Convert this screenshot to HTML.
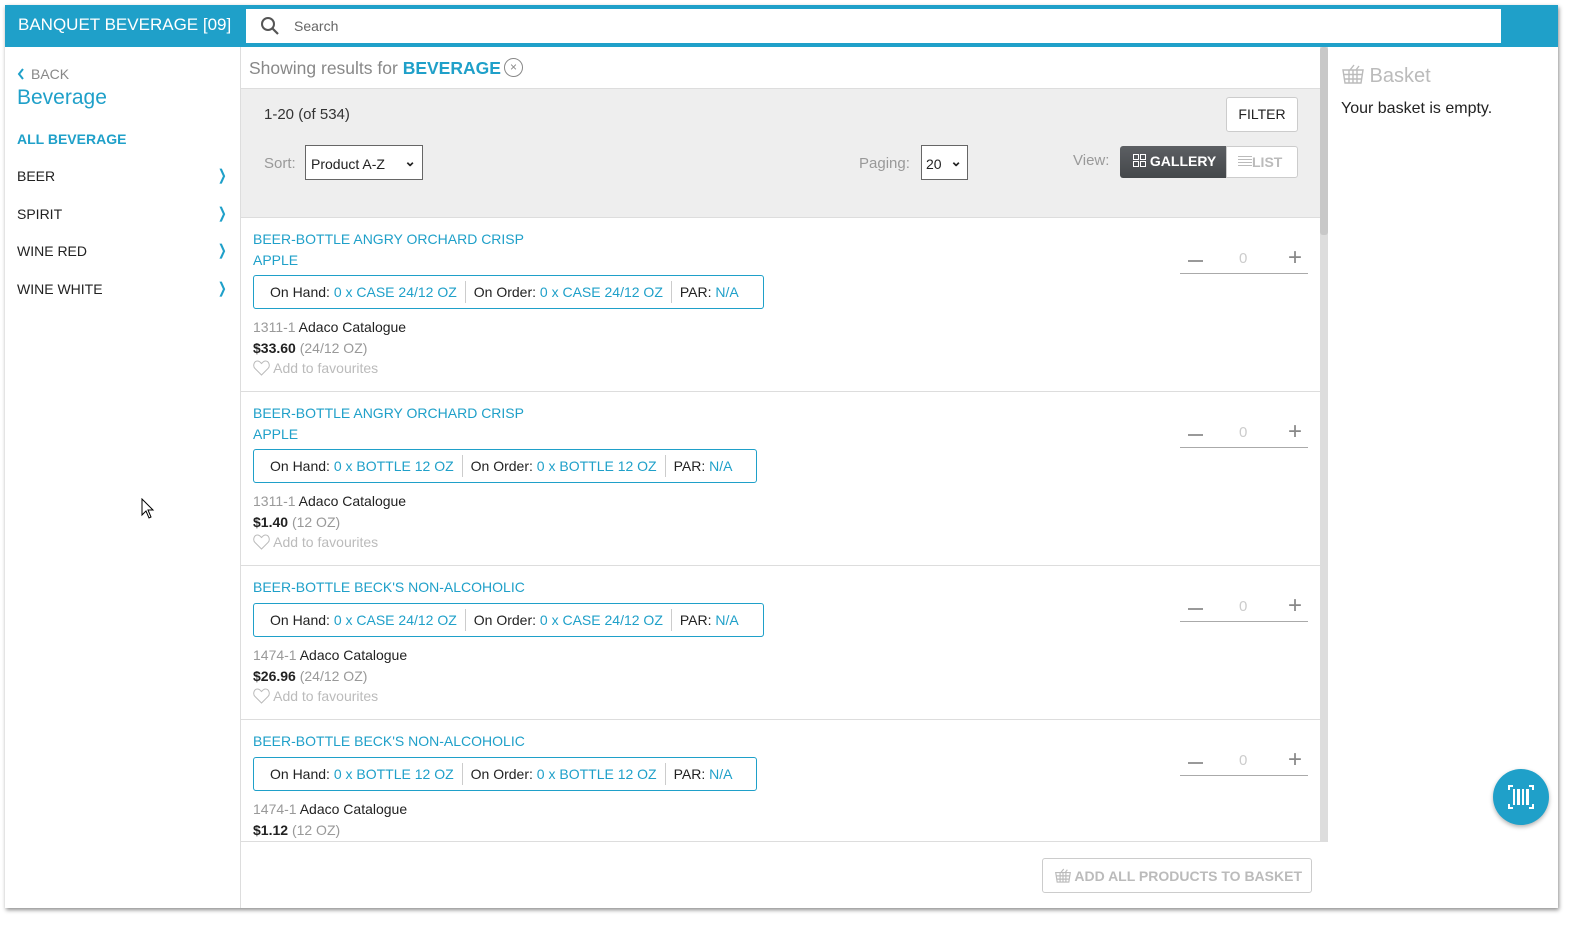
<!DOCTYPE html>
<html><head><meta charset="utf-8"><style>
*{box-sizing:border-box;margin:0;padding:0}
body{width:1592px;height:931px;background:#fff;font-family:"Liberation Sans",sans-serif;position:relative;overflow:hidden;font-size:14px;color:#222}
.a{position:absolute}
.frame{left:5px;top:5px;width:1553px;height:903px;background:#fff;box-shadow:1px 2px 4px rgba(0,0,0,.45)}
.blue{color:#1fa0c9}
.grey{color:#999}
.prod{left:241px;width:1079px;border-bottom:1px solid #ddd;background:#fff}
.name{position:absolute;left:12px;font-size:14px;color:#1fa0c9;line-height:20.5px}
.box{position:absolute;left:12px;height:34px;border:1px solid #1fa0c9;border-radius:3px;display:flex;align-items:center;font-size:14px;padding:0 8px}
.box span.s{padding:0 8px;height:22px;line-height:22px;border-right:1px solid #ccc}
.box span.s:last-child{border-right:none}
.meta{position:absolute;left:12px;font-size:14px;line-height:20.5px}
.qty{position:absolute;left:939px;width:128px;height:24px;border-bottom:1px solid #aaa;color:#999}
.qty .m{position:absolute;left:8px;top:10px;width:15px;height:1.5px;background:#999}
.qty .z{position:absolute;left:59px;top:0;font-size:15px;color:#ccc}
.qty .p{position:absolute;right:6px;top:-6px;font-size:24px;color:#888}
.nav{left:17px;font-size:14px;color:#222}
.chev{left:216px;color:#1fa0c9;font-size:15px;transform:scaleX(.7)}
</style></head><body>
<div class="a frame"></div>
<div class="a" style="left:5px;top:5px;width:1553px;height:42px;background:#1fa0c9"></div>
<div class="a" style="left:18px;top:15px;color:#fff;font-size:17px">BANQUET BEVERAGE [09]</div>
<div class="a" style="left:246px;top:9px;width:1255px;height:34px;background:#fff"></div>
<svg class="a" style="left:260px;top:16px" width="20" height="20" viewBox="0 0 20 20"><circle cx="8" cy="8" r="6" fill="none" stroke="#555" stroke-width="2"/><path d="M12.5 12.5L18 18" stroke="#555" stroke-width="2.2"/></svg>
<div class="a" style="left:294px;top:18px;color:#666;font-size:14px">Search</div>

<div class="a" style="left:240px;top:47px;width:1px;height:861px;background:#ddd"></div>
<div class="a" style="left:17px;top:66px;font-size:14px;color:#888"><svg width="8" height="12" viewBox="0 0 8 12" style="vertical-align:-1px;margin-right:6px"><path d="M6 1L2 6L6 11" fill="none" stroke="#1fa0c9" stroke-width="2"/></svg>BACK</div>
<div class="a blue" style="left:17px;top:86px;font-size:21px">Beverage</div>
<div class="a blue" style="left:17px;top:131px;font-size:14px;font-weight:bold">ALL BEVERAGE</div>
<div class="a nav" style="top:168px">BEER</div><div class="a chev" style="top:166px">&#10095;</div>
<div class="a nav" style="top:206px">SPIRIT</div><div class="a chev" style="top:204px">&#10095;</div>
<div class="a nav" style="top:243px">WINE RED</div><div class="a chev" style="top:241px">&#10095;</div>
<div class="a nav" style="top:281px">WINE WHITE</div><div class="a chev" style="top:279px">&#10095;</div>

<div class="a" style="left:249px;top:58px;font-size:17.5px;color:#888">Showing results for <b class="blue">BEVERAGE</b></div>
<div class="a" style="left:504px;top:58px;width:19px;height:19px;border:1.5px solid #888;border-radius:50%;color:#888;font-size:12px;text-align:center;line-height:16px">×</div>
<div class="a" style="left:241px;top:88px;width:1079px;height:130px;background:#eeeeee;border-top:1px solid #ddd;border-bottom:1px solid #ddd"></div>
<div class="a" style="left:264px;top:106px;font-size:15px;color:#333">1-20 (of 534)</div>
<div class="a" style="left:264px;top:155px;font-size:15px;color:#999">Sort:</div>
<div class="a" style="left:305px;top:145px;width:118px;height:35px;border:1px solid #666;background:#fff;font-size:14px;padding:10px 5px">Product A-Z<span class="a" style="right:6px;top:7px;font-weight:bold">&#8964;</span></div>
<div class="a" style="left:859px;top:155px;font-size:15px;color:#999">Paging:</div>
<div class="a" style="left:921px;top:145px;width:47px;height:35px;border:1px solid #666;background:#fff;font-size:14px;padding:10px 4px">20<span class="a" style="right:5px;top:7px;font-weight:bold">&#8964;</span></div>
<div class="a" style="left:1226px;top:97px;width:72px;height:35px;border:1px solid #ccc;border-radius:3px;background:#fff;font-size:14px;text-align:center;line-height:33px">FILTER</div>
<div class="a" style="left:1073px;top:152px;font-size:15px;color:#999">View:</div>
<div class="a" style="left:1120px;top:146px;width:106px;height:32px;background:linear-gradient(#5c5f63,#44474a);border-radius:3px 0 0 3px;color:#fff;font-weight:bold;font-size:14px;line-height:31px;padding-left:13px">
<svg width="13" height="13" style="vertical-align:-1px" viewBox="0 0 13 13"><g fill="none" stroke="#fff"><rect x=".5" y=".5" width="5" height="5"/><rect x="7.5" y=".5" width="5" height="5"/><rect x=".5" y="7.5" width="5" height="5"/><rect x="7.5" y="7.5" width="5" height="5"/></g></svg> GALLERY</div>
<div class="a" style="left:1226px;top:146px;width:72px;height:32px;background:#fff;border:1px solid #ccc;border-radius:0 3px 3px 0;color:#bbb;font-weight:bold;font-size:14px;line-height:30px;padding-left:11px">
<svg width="14" height="13" style="vertical-align:-1px" viewBox="0 0 14 13"><g stroke="#bbb"><path d="M0 1.5H14M0 4.5H14M0 7.5H14M0 10.5H14"/></g></svg>LIST</div>

<div class="a prod" style="top:218px;height:174px">
<div class="name" style="top:11px">BEER-BOTTLE ANGRY ORCHARD CRISP<br>APPLE</div>
<div class="box" style="top:57px;width:511px"><span class="s">On Hand: <span class="blue">0 x CASE 24/12 OZ</span></span><span class="s">On Order: <span class="blue">0 x CASE 24/12 OZ</span></span><span class="s">PAR: <span class="blue">N/A</span></span></div>
<div class="meta" style="top:99px"><span class="grey">1311-1</span> Adaco Catalogue<br><b>$33.60</b> <span class="grey">(24/12 OZ)</span><br><span style="color:#bbb"><svg width="17" height="16" viewBox="0 0 17 16" style="vertical-align:-3px"><path d="M8.5 15L2 8.5C-.5 6 1 1 4.5 1C6.5 1 7.5 2.5 8.5 3.5C9.5 2.5 10.5 1 12.5 1C16 1 17.5 6 15 8.5Z" fill="none" stroke="#bbb"/></svg> Add to favourites</span></div>
<div class="qty" style="top:32px"><span class="m"></span><span class="z">0</span><span class="p">+</span></div>
</div>
<div class="a prod" style="top:392px;height:174px">
<div class="name" style="top:11px">BEER-BOTTLE ANGRY ORCHARD CRISP<br>APPLE</div>
<div class="box" style="top:57px;width:504px"><span class="s">On Hand: <span class="blue">0 x BOTTLE 12 OZ</span></span><span class="s">On Order: <span class="blue">0 x BOTTLE 12 OZ</span></span><span class="s">PAR: <span class="blue">N/A</span></span></div>
<div class="meta" style="top:99px"><span class="grey">1311-1</span> Adaco Catalogue<br><b>$1.40</b> <span class="grey">(12 OZ)</span><br><span style="color:#bbb"><svg width="17" height="16" viewBox="0 0 17 16" style="vertical-align:-3px"><path d="M8.5 15L2 8.5C-.5 6 1 1 4.5 1C6.5 1 7.5 2.5 8.5 3.5C9.5 2.5 10.5 1 12.5 1C16 1 17.5 6 15 8.5Z" fill="none" stroke="#bbb"/></svg> Add to favourites</span></div>
<div class="qty" style="top:32px"><span class="m"></span><span class="z">0</span><span class="p">+</span></div>
</div>
<div class="a prod" style="top:566px;height:154px">
<div class="name" style="top:11px">BEER-BOTTLE BECK'S NON-ALCOHOLIC</div>
<div class="box" style="top:37px;width:511px"><span class="s">On Hand: <span class="blue">0 x CASE 24/12 OZ</span></span><span class="s">On Order: <span class="blue">0 x CASE 24/12 OZ</span></span><span class="s">PAR: <span class="blue">N/A</span></span></div>
<div class="meta" style="top:79px"><span class="grey">1474-1</span> Adaco Catalogue<br><b>$26.96</b> <span class="grey">(24/12 OZ)</span><br><span style="color:#bbb"><svg width="17" height="16" viewBox="0 0 17 16" style="vertical-align:-3px"><path d="M8.5 15L2 8.5C-.5 6 1 1 4.5 1C6.5 1 7.5 2.5 8.5 3.5C9.5 2.5 10.5 1 12.5 1C16 1 17.5 6 15 8.5Z" fill="none" stroke="#bbb"/></svg> Add to favourites</span></div>
<div class="qty" style="top:32px"><span class="m"></span><span class="z">0</span><span class="p">+</span></div>
</div>
<div class="a prod" style="top:720px;height:122px;overflow:hidden">
<div class="name" style="top:11px">BEER-BOTTLE BECK'S NON-ALCOHOLIC</div>
<div class="box" style="top:37px;width:504px"><span class="s">On Hand: <span class="blue">0 x BOTTLE 12 OZ</span></span><span class="s">On Order: <span class="blue">0 x BOTTLE 12 OZ</span></span><span class="s">PAR: <span class="blue">N/A</span></span></div>
<div class="meta" style="top:79px"><span class="grey">1474-1</span> Adaco Catalogue<br><b>$1.12</b> <span class="grey">(12 OZ)</span></div>
<div class="qty" style="top:32px"><span class="m"></span><span class="z">0</span><span class="p">+</span></div>
</div>
<div class="a" style="left:1320px;top:47px;width:8px;height:795px;background:#ddd"></div>
<div class="a" style="left:1320px;top:47px;width:8px;height:188px;background:#c8c8c8;border-radius:3px"></div>

<div class="a" style="left:1042px;top:858px;width:270px;height:35px;border:1px solid #ccc;border-radius:3px;color:#bbb;font-weight:bold;font-size:14px;line-height:34px;padding-left:12px"><svg width="16" height="15" viewBox="0 0 22 20" style="vertical-align:-2px"><g fill="none" stroke="#bbb" stroke-width="1.6"><path d="M1 6H21L19 19H3Z"/><path d="M7 6V19M11 6V19M15 6V19M2 10.5H20M2.5 15H19.5"/><path d="M8 6L12 1M14 6L17 2"/></g></svg> ADD ALL PRODUCTS TO BASKET</div>

<div class="a" style="left:1342px;top:64px;font-size:20px;color:#bbb"><svg width="22" height="20" style="vertical-align:-2px" viewBox="0 0 22 20"><g fill="none" stroke="#bbb" stroke-width="1.4"><path d="M1 6H21L19 19H3Z"/><path d="M7 6V19M11 6V19M15 6V19M2 10.5H20M2.5 15H19.5"/><path d="M8 6L12 1M14 6L17 2"/></g></svg> Basket</div>
<div class="a" style="left:1341px;top:100px;font-size:16px;color:#222">Your basket is empty.</div>

<div class="a" style="left:1493px;top:769px;width:56px;height:56px;border-radius:50%;background:#1fa0c9;box-shadow:0 2px 4px rgba(0,0,0,.3)">
<svg width="56" height="56" viewBox="0 0 56 56"><g fill="none" stroke="#fff" stroke-width="2"><path d="M16 21V17H20M36 17H40V21M40 35V39H36M20 39H16V35"/></g><g fill="#fff"><rect x="20" y="20" width="2" height="16"/><rect x="24" y="20" width="3" height="16"/><rect x="29" y="20" width="2" height="16"/><rect x="33" y="20" width="3" height="16"/></g></svg></div>

<svg class="a" style="left:141px;top:498px" width="14" height="22" viewBox="0 0 14 22"><path d="M1 1V17L5 13L8 20L10 19L7 12H12Z" fill="#fff" stroke="#000"/></svg>
</body></html>
